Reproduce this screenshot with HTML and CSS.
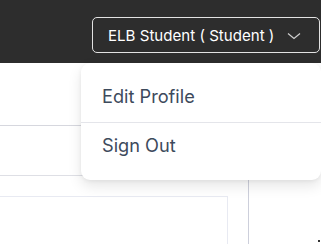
FILE: index.html
```html
<!DOCTYPE html>
<html>
<head>
<meta charset="utf-8">
<link rel="stylesheet" href="styles.css">
</head>
<body>
<header class="topbar">
  <button class="user-btn">
    <span class="user-name">ELB Student ( Student )</span>
    <svg class="chev" width="14" height="8" viewBox="0 0 14 8"><path d="M1 1.5 L7 6.5 L13 1.5" fill="none" stroke="#cfcfcf" stroke-width="1.2"/></svg>
  </button>
  <div class="menu">
    <div class="menu-item first">Edit Profile</div>
    <div class="menu-item divider">Sign Out</div>
  </div>
</header>
<main class="main">
  <section class="left">
    <div class="row"></div>
    <div class="card"></div>
  </section>
  <aside class="right"><span class="dot"></span></aside>
</main>
</body>
</html>
```
FILE: styles.css
```css
html, body { margin: 0; padding: 0; }
body {
  font-family: Inter, "Noto Sans", sans-serif;
  background: #ffffff;
  width: 321px;
  height: 244px;
  overflow: hidden;
}
.topbar {
  position: relative;
  height: 63px;
  background: #2d2d2d;
  display: flex;
  justify-content: flex-end;
  align-items: flex-start;
  padding-right: 1px;
  box-sizing: border-box;
}
.user-btn {
  margin-top: 17px;
  width: 228px;
  height: 36px;
  box-sizing: border-box;
  border: 1px solid #e2e2e2;
  border-radius: 5px;
  background: transparent;
  color: #ffffff;
  font-family: Inter, sans-serif;
  font-size: 15.1px;
  display: flex;
  align-items: center;
  padding: 0 0 0 15px;
  gap: 13px;
}
.chev { margin-top: 1px; }
.menu {
  position: absolute;
  left: 81px;
  top: 63px;
  width: 240px;
  height: 117px;
  background: #fff;
  border-radius: 9px;
  box-shadow: 0 6px 14px rgba(0,0,0,0.10), 0 1px 4px rgba(0,0,0,0.06);
  z-index: 5;
  display: flex;
  flex-direction: column;
}
.menu-item {
  font-size: 18.2px;
  color: #3d4a5c;
  padding: 0 21px;
  line-height: 1;
  display: flex;
  align-items: center;
  box-sizing: border-box;
}
.menu-item.first {
  height: 59px;
  padding-top: 8px;
}
.menu-item.divider {
  border-top: 1px solid #e4e5ea;
  height: 54px;
  padding-bottom: 8px;
}
.main {
  display: flex;
  height: 181px;
  overflow: hidden;
}
.left {
  width: 249px;
  border-right: 1px solid #cdcfdb;
  box-sizing: border-box;
}
.row {
  margin-top: 62px;
  height: 51px;
  border-top: 1px solid #d6d7de;
  border-bottom: 1px solid #dedfe5;
  box-sizing: border-box;
}
.card {
  margin-top: 20px;
  margin-left: -1px;
  width: 229px;
  height: 48px;
  border: 1px solid #e8eaf2;
  border-bottom: none;
  box-sizing: border-box;
}
.right {
  flex: 1;
  position: relative;
}
.dot {
  position: absolute;
  right: 1px;
  bottom: 2px;
  width: 2px;
  height: 2px;
  background: #333;
}
```
